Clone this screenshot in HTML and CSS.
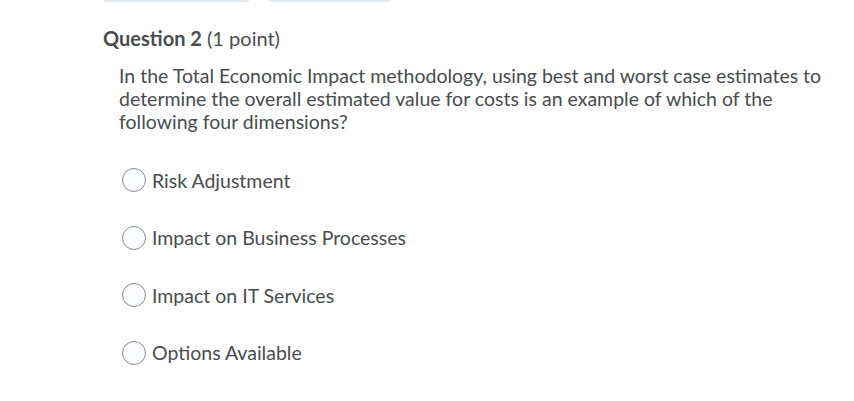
FILE: index.html
```html
<!DOCTYPE html>
<html>
<head>
<meta charset="utf-8">
<link rel="stylesheet" href="styles.css">
</head>
<body>
<div class="page">
  <div class="tabs">
    <div class="tab tab-a"></div>
    <div class="tab tab-b"></div>
  </div>
  <h2 class="qtitle"><strong>Question 2</strong> <span class="pts">(1 point)</span></h2>
  <div class="qbody">
    <p class="qtext">In the Total Economic Impact methodology, using best and worst case estimates to determine the overall estimated value for costs is an example of which of the following four dimensions?</p>
    <ul class="options">
      <li class="option"><span class="radio"></span><span class="label">Risk Adjustment</span></li>
      <li class="option"><span class="radio"></span><span class="label">Impact on Business Processes</span></li>
      <li class="option"><span class="radio"></span><span class="label">Impact on IT Services</span></li>
      <li class="option"><span class="radio"></span><span class="label">Options Available</span></li>
    </ul>
  </div>
</div>
</body>
</html>
```
FILE: styles.css
```css
html, body {
  margin: 0;
  padding: 0;
  background: #ffffff;
}
body {
  font-family: Lato, "Open Sans", sans-serif;
  color: #494c4e;
  width: 854px;
  height: 401px;
  overflow: hidden;
}
.page {
  padding-left: 103px;
}
.tabs {
  display: flex;
  gap: 18px;
  height: 2px;
  overflow: hidden;
}
.tab {
  height: 8px;
  margin-top: -6px;
  background: #e3e9f1;
  border-radius: 4px;
}
.tab-a { width: 147px; }
.tab-b { width: 124px; }
.qtitle {
  margin: 24px 0 0 0;
  font-size: 20px;
  line-height: 24px;
  font-weight: normal;
}
.qtitle strong {
  font-weight: 700;
}
.qbody {
  padding-left: 16px;
}
.qtext {
  margin: 14px 0 0 0;
  font-size: 19.5px;
  line-height: 23px;
  width: 705px;
}
.options {
  list-style: none;
  margin: 35px 0 0 0;
  padding: 0;
  display: flex;
  flex-direction: column;
  gap: 33.5px;
}
.option {
  display: flex;
  align-items: center;
  height: 24px;
  font-size: 19.5px;
}
.radio {
  box-sizing: border-box;
  width: 24px;
  height: 24px;
  margin-left: 3px;
  margin-right: 6px;
  border-radius: 50%;
  border: 1px solid #868c8f;
  background: #f9fbff;
}
```
